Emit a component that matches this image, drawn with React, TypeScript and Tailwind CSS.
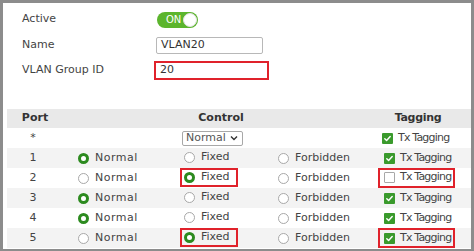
import React from 'react';

type Choice = 'normal' | 'fixed' | 'forbidden';

interface PortRow {
  port: string;
  choice: Choice;
  tagged: boolean;
  highlight?: boolean;
}

const rows: PortRow[] = [
  { port: '1', choice: 'normal', tagged: true },
  { port: '2', choice: 'fixed', tagged: false, highlight: true },
  { port: '3', choice: 'normal', tagged: true },
  { port: '4', choice: 'normal', tagged: true },
  { port: '5', choice: 'fixed', tagged: true, highlight: true },
];

function Radio({ on }: { on: boolean }) {
  return on ? (
    <span className="inline-block w-[11px] h-[11px] rounded-full border-[3px] border-[#2c8a1f] bg-white shrink-0" />
  ) : (
    <span className="inline-block w-[11px] h-[11px] rounded-full border border-[#a8a8a8] bg-white shrink-0" />
  );
}

function Check({ on }: { on: boolean }) {
  return on ? (
    <span className="inline-flex items-center justify-center w-[11px] h-[11px] rounded-[1px] bg-[#3a9a2c] shrink-0">
      <svg width="9" height="9" viewBox="0 0 10 10">
        <path d="M2 5.2l2 2L8 2.8" fill="none" stroke="white" strokeWidth="1.6" strokeLinecap="round" strokeLinejoin="round" />
      </svg>
    </span>
  ) : (
    <span className="inline-block w-[11px] h-[11px] rounded-[1px] border border-[#a8a8a8] bg-white shrink-0" />
  );
}

export default function App() {
  return (
    <div
      className="w-[474px] h-[251px] overflow-hidden bg-white border-l-[3px] border-t-[3px] border-r-[3px] border-b-[2px] border-[#8c8c8c] text-[11px] text-[#444]"
      style={{ fontFamily: '"DejaVu Sans", sans-serif' }}
    >
      {/* Settings */}
      <div className="pl-[19px] pt-[8px]">
        <div className="flex items-center h-[17px]">
          <span className="w-[135px]">Active</span>
          <span className="flex items-center w-[41px] h-[16px] rounded-full bg-[#5cb52d] pl-[9px] pr-[1px]">
            <span className="text-white text-[10px] leading-none">ON</span>
            <span className="ml-auto w-[14px] h-[14px] rounded-full bg-white border border-[#e2e2e2]" />
          </span>
        </div>
        <div className="flex items-center h-[17px] mt-[9px]">
          <span className="w-[134px]">Name</span>
          <span className="flex items-center w-[107px] h-[17px] border border-[#b8b8b8] rounded-[2px] px-[4px] text-[#333]">
            VLAN20
          </span>
        </div>
        <div className="flex items-center h-[19px] mt-[7px]">
          <span className="w-[132px]">VLAN Group ID</span>
          <span className="flex items-center w-[115px] h-[19px] border-2 border-[#e0222b] px-[4px] text-[#333]">
            20
          </span>
        </div>
      </div>

      {/* Port table */}
      <div className="ml-[4px] mt-[29px] w-[464px]">
        <div className="flex items-center h-[19px] bg-[#e9e9e9] font-bold text-[#333]">
          <span className="w-[56px] text-center">Port</span>
          <span className="w-[316px] text-center">Control</span>
          <span className="flex-1 text-center pr-[14px] tracking-[-0.3px]">Tagging</span>
        </div>

        <div className="flex items-center h-[20px]">
          <span className="w-[52px] text-center">*</span>
          <span className="w-[123px]" />
          <span className="flex items-center w-[61px] h-[15px] border border-[#a8a8a8] rounded-[2px] pl-[3px] pr-[4px] text-[#555]">
            Normal
            <svg className="ml-auto" width="8" height="6" viewBox="0 0 8 6">
              <path d="M1 1.5l3 3 3-3" fill="none" stroke="#333" strokeWidth="1.4" />
            </svg>
          </span>
          <span className="w-[139px]" />
          <span className="flex items-center gap-[5px] tracking-[-0.8px]">
            <Check on />
            Tx Tagging
          </span>
        </div>

        {rows.map((r, i) => (
          <div key={r.port} className={`flex items-center h-[20px] ${i % 2 === 0 ? 'bg-[#f3f3f3]' : 'bg-white'}`}>
            <span className="w-[52px] text-center">{r.port}</span>
            <span className="w-[120px] pl-[19px] flex items-center gap-[6px] tracking-[0.5px]">
              <Radio on={r.choice === 'normal'} />
              Normal
            </span>
            <span className="w-[99px] pl-[1px]">
              <span
                className={`inline-flex items-center gap-[6px] h-[19px] pl-[2px] pr-[6px] border-2 ${
                  r.highlight ? 'border-[#e0222b]' : 'border-transparent'
                }`}
              >
                <Radio on={r.choice === 'fixed'} />
                Fixed
              </span>
            </span>
            <span className="w-[99px] flex items-center gap-[6px]">
              <Radio on={r.choice === 'forbidden'} />
              Forbidden
            </span>
            <span className="pl-[1px]">
              <span
                className={`inline-flex items-center gap-[5px] h-[20px] pl-[4px] pr-[2px] border-2 tracking-[-0.8px] ${
                  r.highlight ? 'border-[#e0222b]' : 'border-transparent'
                }`}
              >
                <Check on={r.tagged} />
                Tx Tagging
              </span>
            </span>
          </div>
        ))}
      </div>
    </div>
  );
}
